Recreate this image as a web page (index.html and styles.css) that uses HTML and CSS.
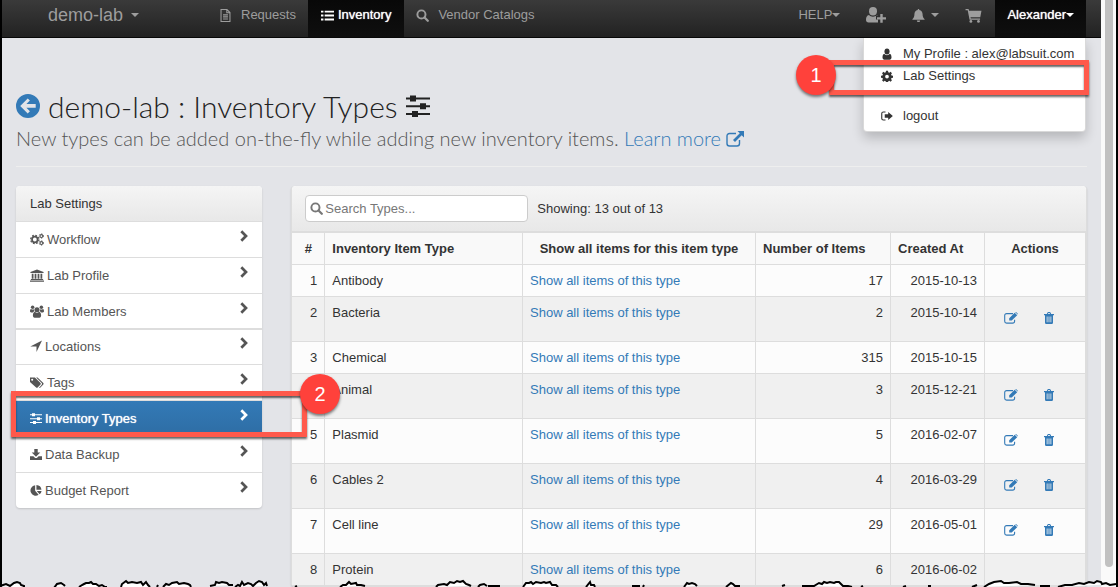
FILE: index.html
```html
<!DOCTYPE html>
<html lang="en">
<head>
  <meta charset="UTF-8">
  <meta name="viewport" content="width=device-width, initial-scale=1.0">
  <title>demo-lab : Inventory Types</title>
  <link rel="stylesheet" href="styles.css">
</head>
<body>

  <!-- Icons -->
  <svg class="sprite" aria-hidden="true">
    <symbol id="i-file" viewBox="0 0 16 16"><path d="M2.500.7h7.300l3.700 3.700v10.900h-11zM9.600.9v3.800h3.700M5 7.200h6M5 9.700h6M5 12.200h6" fill="none" stroke="currentColor" stroke-width="1.300"/></symbol>
    <symbol id="i-list" viewBox="0 0 16 16"><path d="M0 2h3v2.4H0zM4.5 2H16v2.4H4.5zM0 6.8h3v2.4H0zM4.5 6.8H16v2.4H4.5zM0 11.6h3V14H0zM4.5 11.6H16V14H4.5z"/></symbol>
    <symbol id="i-search" viewBox="0 0 16 16"><circle cx="6.7" cy="6.7" r="5" fill="none" stroke="currentColor" stroke-width="2.4"/><path d="M10.5 10.5l4 4" stroke="currentColor" stroke-width="2.8" stroke-linecap="round"/></symbol>
    <symbol id="i-user" viewBox="0 0 16 16"><ellipse cx="8" cy="4.6" rx="3.4" ry="4"/><path d="M4.3 7.8C2.600 8.200 2 10.500 2 12.800 2 14.500 3 15.500 4.500 15.500h7c1.500 0 2.500-1 2.500-2.700 0-2.300-.6-4.600-2.300-5C10.200 10.200 5.800 10.200 4.300 7.800z"/></symbol>
    <symbol id="i-user-plus" viewBox="0 0 20 16"><ellipse cx="7" cy="4.200" rx="4" ry="4.200"/><path d="M3 8C.8 8.300 0 10.500 0 12.800 0 14.500 1 15.500 2.500 15.500h9.500v-3H10V8.600h2C11.700 8.200 11.300 8.100 11 8 9 10.300 5 10.300 3 8z"/><path d="M14.300 7h2.400v3.200H20v2.400h-3.300v3.200h-2.400v-3.200H11v-2.400h3.300z"/></symbol>
    <symbol id="i-bell" viewBox="0 0 16 16"><path d="M8 0c.8 0 1 .6 1 1.300 2.700.5 4 2.600 4 5 0 3.500 1 4.900 2.500 6.300v.6H.5v-.6C2 11.200 3 9.800 3 6.300c0-2.400 1.300-4.500 4-5C7 .6 7.200 0 8 0zM6 14h4c0 1.200-.8 2-2 2s-2-.8-2-2z"/></symbol>
    <symbol id="i-cart" viewBox="0 0 17 16"><path d="M0 1h3.200l.6 1.800H17l-1.300 7H5.300l.3 1.300h9.900v1.400H4.300L2.300 2.400H0z"/><circle cx="5.700" cy="14.300" r="1.500"/><circle cx="13.800" cy="14.300" r="1.500"/></symbol>
    <symbol id="i-gear" viewBox="0 0 16 16"><path fill-rule="evenodd" d="M6.700 1h2.600l.4 2 1.400.6 1.700-1.200 1.800 1.800-1.200 1.700.6 1.400 2 .4v2.600l-2 .4-.6 1.400 1.200 1.700-1.800 1.800-1.700-1.200-1.400.6-.4 2H6.700l-.4-2-1.400-.6-1.700 1.200-1.800-1.800 1.200-1.700-.6-1.400-2-.4V7.700l2-.4.6-1.400L1.400 4.200l1.800-1.800 1.700 1.200L6.300 3zM8 6.300a2.500 2.500 0 1 0 0 5 2.500 2.500 0 0 0 0-5z"/></symbol>
    <symbol id="i-logout" viewBox="0 0 16 16"><path d="M6 2.700H3.200C1.800 2.700 1 3.500 1 4.800v6.400c0 1.300.8 2.100 2.200 2.100H6" fill="none" stroke="currentColor" stroke-width="1.500"/><path d="M9.600 2.800L15.800 8l-6.200 5.200V10.300H5V5.700h4.600z"/></symbol>
    <symbol id="i-back" viewBox="0 0 24 24"><path fill-rule="evenodd" d="M12 0a12 12 0 1 0 0 24 12 12 0 0 0 0-24zM11.700 4.400l2.200 2.200-3.500 3.500h9.300v3.600h-9.300l3.500 3.500-2.200 2.200L4.200 12z"/></symbol>
    <symbol id="i-sliders" viewBox="0 0 24 22"><path d="M0 2.500h4v2H0zM10 2.500h14v2H10zM4 .5h6v6H4zM0 10.300h14v2H0zM20 10.300h4v2h-4zM14 8.300h6v6h-6zM0 18h6v2H0zM12 18h12v2H12zM6 16h6v6H6z"/></symbol>
    <symbol id="i-external" viewBox="0 0 18 16"><path d="M10 2.500H3.500C2 2.500 1 3.500 1 5v7.500C1 14 2 15 3.500 15H11c1.500 0 2.500-1 2.500-2.500V9" fill="none" stroke="currentColor" stroke-width="1.400"/><path d="M11.500 0H18v6.500l-2.300-2.300L9 11 7 9l6.800-6.700z"/></symbol>
    <symbol id="i-cogs" viewBox="0 0 16 14"><circle cx="5.500" cy="7" r="3.200" fill="none" stroke="currentColor" stroke-width="2"/><circle cx="5.500" cy="7" r="4.700" fill="none" stroke="currentColor" stroke-width="1.500" stroke-dasharray="2 1.690"/><g fill="none" stroke="currentColor"><circle cx="13" cy="3" r="1.600" stroke-width="1.200"/><circle cx="13" cy="3" r="2.500" stroke-dasharray="1.300 1.318"/><circle cx="13" cy="11" r="1.600" stroke-width="1.200"/><circle cx="13" cy="11" r="2.500" stroke-dasharray="1.300 1.318"/></g></symbol>
    <symbol id="i-bank" viewBox="0 0 16 14"><path d="M8 0l7.500 3v1.200H.5V3zM2 5h2v5.600H2zM5.300 5h2v5.600h-2zM8.700 5h2v5.600h-2zM12 5h2v5.600h-2zM1 11h14v1H1zM0 12.700h16V14H0z"/></symbol>
    <symbol id="i-users" viewBox="0 0 16 14"><circle cx="8" cy="5" r="2.900"/><path d="M5.600 7.300C4 7.600 3.300 9.500 3.300 11.700c0 1.500.7 2.300 1.900 2.300h5.600c1.200 0 1.900-.8 1.900-2.300 0-2.200-.7-4.100-2.300-4.400C9 9 7 9 5.600 7.300z"/><circle cx="3" cy="2.100" r="2"/><circle cx="13" cy="2.100" r="2"/><path d="M1.200 4C.2 4.300 0 5.500 0 6.700 0 7.500.5 8 1.300 8h1.900c.5-.8 1-1.200 1.800-1.400C4.500 5.800 4.400 5.200 4.500 4.300 3.500 5 2.200 4.900 1.200 4zM14.800 4c1 .3 1.200 1.500 1.200 2.700 0 .8-.5 1.300-1.300 1.300h-1.900c-.5-.8-1-1.200-1.800-1.400.5-.8.6-1.400.5-2.300 1 .7 2.300.6 3.300-.3z"/></symbol>
    <symbol id="i-arrow" viewBox="0 0 12 12"><path d="M12 0L6.500 11.500V6H.3z"/></symbol>
    <symbol id="i-tags" viewBox="0 0 16 14"><path fill-rule="evenodd" d="M0 1.300h5.600L12 7.700c.5.500.5 1.200 0 1.700l-3.300 3.300c-.5.500-1.200.5-1.700 0L0 6.300zM2.500 2.700a1.200 1.200 0 1 0 0 2.400 1.200 1.200 0 0 0 0-2.400z"/><path d="M7 1.300h1.600L15.200 7.700c.5.500.5 1.200 0 1.700l-3.300 3.300c-.5.500-1 .6-1.500.2l3-3.400c.5-.6.5-1.200 0-1.800z"/></symbol>
    <symbol id="i-download" viewBox="0 0 14 13"><path d="M5 0h4v4.300h3L7 9.200 2 4.300h3zM0 8.500h4l2 2h2l2-2h4V13H0z"/></symbol>
    <symbol id="i-pie" viewBox="0 0 14 14"><path d="M6 1v6.400l4 4.500A6 6 0 1 1 6 1zM7.500.5A6.300 6.300 0 0 1 13.400 6H7.500zM7.900 7.500h5.600A6 6 0 0 1 11.200 11.500z"/></symbol>
    <symbol id="i-chevron" viewBox="0 0 8 12"><path d="M1.300 1.300L6 6l-4.700 4.700" fill="none" stroke="currentColor" stroke-width="2.700"/></symbol>
    <symbol id="i-edit" viewBox="0 0 14 12"><path d="M9 1.600H2.600C1.500 1.600.7 2.300.7 3.500v5.700c0 1.200.8 1.900 1.900 1.900h6c1.200 0 2-.7 2-1.900V7.700" fill="none" stroke="currentColor" stroke-width="1.100"/><path d="M10.700.8l2.500 2.400-5.500 5.400H5.200V6.200zM11.300.3c.3-.3.700-.3 1 0l1.300 1.300c.3.300.3.700 0 1z"/></symbol>
    <symbol id="i-trash" viewBox="0 0 10 12"><path fill-rule="evenodd" d="M0 2h2.800l.7-1.500C3.700.2 3.900 0 4.200 0h1.600c.3 0 .5.200.7.500L7.200 2H10v1.200H9v7.300C9 11.400 8.500 12 7.800 12H2.200C1.500 12 1 11.400 1 10.500V3.200H0zM4 2h2L5.600 1H4.400zM2.700 4.400v5.800h.8V4.400zM4.600 4.400v5.800h.8V4.400zM6.500 4.400v5.800h.8V4.400z"/></symbol>
  </svg>

  <div class="page">
    <nav class="navbar">
      <a class="brand" href="#">demo-lab <span class="caret"></span></a>
      <ul class="nav nav-main">
        <li><a href="#"><svg class="icon"><use href="#i-file"/></svg>Requests</a></li>
        <li class="active"><a class="tight" href="#"><svg class="icon"><use href="#i-list"/></svg>Inventory</a></li>
        <li><a href="#"><svg class="icon"><use href="#i-search"/></svg>Vendor Catalogs</a></li>
      </ul>
      <ul class="nav nav-right">
        <li><a href="#">HELP<span class="caret"></span></a></li>
        <li><a href="#" aria-label="Invite user"><svg class="icon-wide"><use href="#i-user-plus"/></svg></a></li>
        <li><a class="bell" href="#" aria-label="Notifications"><svg class="icon"><use href="#i-bell"/></svg><span class="caret"></span></a></li>
        <li><a href="#" aria-label="Cart"><svg class="icon-cart"><use href="#i-cart"/></svg></a></li>
        <li class="active account">
          <a href="#">Alexander<span class="caret"></span></a>
          <ul class="dropdown">
            <li><a href="#"><svg class="icon-small"><use href="#i-user"/></svg>My Profile : alex@labsuit.com</a></li>
            <li class="marked">
              <a href="#"><svg class="icon-small"><use href="#i-gear"/></svg>Lab Settings</a>
              <div class="callout callout-one"><span class="badge">1</span></div>
            </li>
            <li class="divided"><a href="#"><svg class="icon-small"><use href="#i-logout"/></svg>logout</a></li>
          </ul>
        </li>
      </ul>
    </nav>

    <main class="content">
      <header class="page-header">
        <h1>
          <a href="#" aria-label="Back"><svg class="icon-title"><use href="#i-back"/></svg></a>
          demo-lab : Inventory Types
          <svg class="icon-title"><use href="#i-sliders"/></svg>
        </h1>
        <p>New types can be added on-the-fly while adding new inventory items.
          <a href="#">Learn more <svg class="icon-link"><use href="#i-external"/></svg></a></p>
      </header>

      <div class="columns">
        <aside class="panel sidebar">
          <h2 class="panel-heading">Lab Settings</h2>
          <ul class="menu">
            <li><a href="#"><svg class="icon-menu"><use href="#i-cogs"/></svg>Workflow<svg class="chevron"><use href="#i-chevron"/></svg></a></li>
            <li><a href="#"><svg class="icon-menu"><use href="#i-bank"/></svg>Lab Profile<svg class="chevron"><use href="#i-chevron"/></svg></a></li>
            <li><a href="#"><svg class="icon-menu"><use href="#i-users"/></svg>Lab Members<svg class="chevron"><use href="#i-chevron"/></svg></a></li>
          </ul>
          <ul class="menu">
            <li><a href="#"><svg class="icon-menu slim"><use href="#i-arrow"/></svg>Locations<svg class="chevron"><use href="#i-chevron"/></svg></a></li>
            <li><a href="#"><svg class="icon-menu"><use href="#i-tags"/></svg>Tags<svg class="chevron"><use href="#i-chevron"/></svg></a></li>
            <li class="active">
              <a href="#"><svg class="icon-menu slim"><use href="#i-sliders"/></svg>Inventory Types<svg class="chevron"><use href="#i-chevron"/></svg></a>
              <div class="callout callout-two"><span class="badge">2</span></div>
            </li>
            <li><a href="#"><svg class="icon-menu slim"><use href="#i-download"/></svg>Data Backup<svg class="chevron"><use href="#i-chevron"/></svg></a></li>
            <li><a href="#"><svg class="icon-menu slim"><use href="#i-pie"/></svg>Budget Report<svg class="chevron"><use href="#i-chevron"/></svg></a></li>
          </ul>
        </aside>

        <section class="panel types">
          <div class="panel-heading toolbar">
            <label class="search">
              <svg class="icon"><use href="#i-search"/></svg>
              <input type="text" placeholder="Search Types..." aria-label="Search Types">
            </label>
            <span>Showing: 13 out of 13</span>
          </div>
          <table>
            <thead>
              <tr>
                <th class="col-num">#</th>
                <th class="left">Inventory Item Type</th>
                <th class="col-show">Show all items for this item type</th>
                <th class="col-count left">Number of Items</th>
                <th class="col-date left">Created At</th>
                <th class="col-actions">Actions</th>
              </tr>
            </thead>
            <tbody id="types"></tbody>
          </table>
        </section>
      </div>
    </main>
  </div>
  <div class="scrollbar"><div class="thumb"></div></div>

  <!-- Torn paper edge -->
  <svg class="torn" viewBox="0 0 1118 8" preserveAspectRatio="none" aria-hidden="true">
    <path d="M0 7l3-1 3-1 4 2 4-3 3-1 3 1 1 2 3 1v2M54 9l3-4 4-1 3 2 1 1M79 8l3-2 2-1 2-1 3 0 2-1 2 2 3 0 3 2 3-1 3 2 2 0M121 8l1-3 4-3 2 2 4-1 5 1 4-1 2 3 3-3 2 3 2 2M157 8l1-2M163 8l3-3 3 1 3-2 5-1 2 2 5-1 4 1 2 1 1 2M210 7l5-1 1-3 3 1 3-1 5 1 2 2 4 0M235 8l3-2 2 1 2-4 2 3 4-2 3 1 2 2 3-3 3-2 3 1 2 3 2-2 1 3M295 8l2-1M340 8l3-2 3 0 3-3 2 2 5-1 1 2 4 0 4 1M436 8l2-2 6-1 3 1 3-3 4 1 3-2 3 1 3-1 3 3 3 1 2 1M478 8l2-2 4-1 3 2M488 7h12M523 8l3-4 3 0 2-1 2 2 3-2 5 1 3-1 2 1 4-1 2 3 4 0 2 2M586 8l4-5 1 3 3 0 1 2M632 7l8 0M643 8l1-2M684 8l3-4 2 1 3-1 3 1 2 2M726 8l5-4 2 1 2 2 5 0M782 7l3-1M802 7l12 0 5-3 3 1 2-2 3 1 3-1 4 1 2-1 3 0 4 4 5 0 4 1M861 8l2-1M903 8l3-1M928 7h3M972 8l5-2M984 8l5-3 5-2 7-1 3 2 5 0 8-1 4 2 7 0 7 1M1040 7l10 0M1058 8l7-2 7 0 7-2 5 1 5-2 5 1 3-2 4 1 1 2 4-1 4 2 6-1"/>
  </svg>

  <script>
    const types = [
      { name: "Antibody", count: 17, created: "2015-10-13" },
      { name: "Bacteria", count: 2, created: "2015-10-14", editable: true },
      { name: "Chemical", count: 315, created: "2015-10-15" },
      { name: "Animal", count: 3, created: "2015-12-21", editable: true },
      { name: "Plasmid", count: 5, created: "2016-02-07", editable: true },
      { name: "Cables 2", count: 4, created: "2016-03-29", editable: true },
      { name: "Cell line", count: 29, created: "2016-05-01", editable: true },
      { name: "Protein", count: 6, created: "2016-06-02" }
    ];

    const actions = `
      <div class="actions">
        <button type="button" aria-label="Edit"><svg class="icon-edit"><use href="#i-edit"/></svg></button>
        <button type="button" aria-label="Delete"><svg class="icon-trash"><use href="#i-trash"/></svg></button>
      </div>`;

    document.getElementById("types").innerHTML = types.map((type, index) => `
      <tr>
        <td class="right">${index + 1}</td>
        <td>${type.name}</td>
        <td><a href="#">Show all items of this type</a></td>
        <td class="right">${type.count}</td>
        <td class="right">${type.created}</td>
        <td>${type.editable ? actions : ""}</td>
      </tr>`).join("");
  </script>
</body>
</html>
```
FILE: styles.css
```css
* { margin: 0; padding: 0; box-sizing: border-box; }
body {
  display: flex;
  height: 100vh;
  overflow: hidden;
  border: solid #000;
  border-width: 0 2px;
  background: #e3e4e8;
  color: #333;
  font-family: "Liberation Sans", Arial, sans-serif;
  font-size: 13px;
  line-height: 16px;
}
ul { list-style: none; }
a { color: #337ab7; text-decoration: none; }
svg { fill: currentColor; flex: none; }
.sprite { position: absolute; width: 0; height: 0; }
.icon { width: 13px; height: 13px; }
.icon-small { width: 12px; height: 12px; }
.icon-wide { width: 20px; height: 16px; }
.icon-cart { width: 17px; height: 15px; }
.icon-title { width: 24px; height: 24px; }
.icon-link { width: 18px; height: 16px; }
.icon-edit { width: 14px; height: 12px; }
.icon-trash { width: 10px; height: 12px; }
.caret {
  border: 4px solid transparent;
  border-top-color: currentColor;
  border-bottom: 0;
}

.page { flex: 1; min-width: 0; }

/* Navbar */
.navbar {
  display: flex;
  height: 38px;
  background: linear-gradient(#3a3a3a, #222);
  border-bottom: 1px solid #080808;
}
.navbar a {
  display: flex;
  align-items: center;
  color: #9d9d9d;
}
.navbar .brand {
  gap: 8px;
  width: 205px;
  padding: 0 0 7px 46px;
  font-size: 18px;
}
.nav { display: flex; }
.nav > li > a {
  height: 37px;
  padding: 0 12px 7px;
  gap: 9px;
}
.nav > li > a.tight { padding: 0 13px 7px; gap: 4px; }
.nav-right { margin-left: auto; margin-right: 15px; }
.nav-right > li > a { padding: 0 13px 7px; gap: 0; }
.nav-right > .account > a { padding: 0 12px 7px; }
.nav-right > li > a.bell { gap: 6px; }
.nav > .active { background: linear-gradient(#080808, #0f0f0f); }
.nav > .active > a { color: #fff; text-shadow: 0 0 1px #fff; }
.account { position: relative; }

.dropdown {
  position: absolute;
  z-index: 5;
  top: 38px;
  right: 0;
  width: 223px;
  padding: 5px 0 4px;
  background: #fff;
  border: 1px solid rgba(0,0,0,0.15);
  border-top: 0;
  border-radius: 0 0 4px 4px;
  box-shadow: 0 6px 12px rgba(0,0,0,0.2);
}
.dropdown a {
  height: 22px;
  padding: 0 17px;
  gap: 10px;
  color: #333;
  white-space: nowrap;
}
.dropdown .marked { position: relative; }
.dropdown .divided { margin-top: 18px; }

/* Callouts */
.callout {
  position: absolute;
  z-index: 10;
  border: 5px solid #ff594b;
  box-shadow: 0 2px 2px rgba(0,0,0,0.6), inset 0 2px 2px rgba(0,0,0,0.6);
  pointer-events: none;
}
.callout-one { top: -5px; right: -4px; width: 260px; height: 35px; }
.callout-two { top: -10px; left: -5px; width: 296px; height: 46px; }
.badge {
  position: absolute;
  display: flex;
  align-items: center;
  justify-content: center;
  width: 40px;
  height: 40px;
  border-radius: 50%;
  background: #ff413b;
  box-shadow: 0 2px 3px rgba(0,0,0,0.5);
  color: #fff;
  font-size: 20px;
}
.callout-one .badge { top: -10px; left: -38px; }
.callout-two .badge { top: -22px; right: -38px; }

/* Page header */
.content { padding: 51px 14px 0; }
.page-header {
  padding-bottom: 15px;
  border-bottom: 1px solid #eee;
  font-family: Lato, "Liberation Sans", sans-serif;
  font-weight: 300;
}
.page-header h1 {
  display: flex;
  align-items: center;
  gap: 8px;
  color: #222;
  font-size: 30px;
  font-weight: 300;
  line-height: 34px;
}
.page-header h1 a { display: flex; }
.page-header p {
  padding-top: 2px;
  color: #555;
  font-size: 20px;
  line-height: 26px;
}
.page-header p svg { vertical-align: -1px; }

/* Panels */
.columns {
  display: flex;
  align-items: flex-start;
  gap: 29px;
  padding-top: 19px;
}
.panel {
  background: #fff;
  border-radius: 4px;
  box-shadow: 0 1px 2px rgba(0,0,0,0.15);
}
.panel-heading {
  padding: 10px 14px 9px;
  background: linear-gradient(#f5f5f5, #e8e8e8);
  border-bottom: 1px solid #ddd;
  border-radius: 4px 4px 0 0;
  font-size: 13px;
  font-weight: 400;
}
.sidebar { width: 23%; }
.menu li { border-bottom: 1px solid #ddd; }
.menu:last-child li:last-child { border-bottom: 0; }
.menu + .menu {
  margin-top: -1px;
  box-shadow: 0 -1px 0 #ddd, inset 0 1px 0 #ddd;
}
.menu a {
  display: flex;
  align-items: center;
  gap: 3px;
  height: 35px;
  padding: 0 14px;
  color: #555;
}
.icon-menu { width: 14px; height: 13px; }
.icon-menu.slim { width: 12px; }
.chevron { width: 8px; height: 12px; margin: 0 0 7px auto; }
.menu .active {
  position: relative;
  background: linear-gradient(#337ab7, #2e6da4);
}
.menu .active > a { color: #fff; text-shadow: 0 0 1px #fff; }

.types { flex: 1; min-width: 0; border: 1px solid #ddd; border-top: 0; }
.toolbar {
  display: flex;
  align-items: center;
  gap: 9px;
  padding: 9px 13px;
  border-bottom-width: 2px;
}
.search {
  display: flex;
  align-items: center;
  gap: 2px;
  width: 223px;
  height: 27px;
  padding: 0 4px;
  background: #fff;
  border: 1px solid #ccc;
  border-radius: 4px;
  color: #777;
}
.search input {
  flex: 1;
  min-width: 0;
  border: 0;
  outline: 0;
  background: none;
  font: inherit;
}
.search input::placeholder { color: #777; opacity: 1; }

table {
  width: 100%;
  table-layout: fixed;
  border-collapse: separate;
  border-spacing: 0;
}
th, td {
  padding: 8px 7px 7px;
  border-right: 1px solid #ddd;
  border-bottom: 1px solid #ddd;
  text-align: left;
  vertical-align: top;
}
th { background: #f9f9f9; text-align: center; white-space: nowrap; }
th.left { text-align: left; }
td.right { text-align: right; }
tbody tr { background: #fcfcfc; }
tbody tr:nth-child(even) { background: #f0f0f0; }
.col-num { width: 33px; }
.col-show { width: 233px; }
.col-count { width: 135px; }
.col-date { width: 94px; }
.col-actions { width: 101px; }
.actions { display: flex; padding-bottom: 4px; }
.actions button {
  display: flex;
  align-items: center;
  justify-content: center;
  width: 38px;
  height: 25px;
  border: 0;
  background: none;
  color: #337ab7;
}

/* Window edges */
.scrollbar {
  width: 15px;
  padding: 0 3px 0 4px;
  background: #fafafa;
}
.thumb {
  height: calc(100% - 20px);
  background: #c1c1c1;
  border-radius: 0 0 4px 4px;
}
.torn {
  position: absolute;
  z-index: 20;
  left: 0;
  bottom: 0;
  width: 100%;
  height: 8px;
  fill: #fff;
  stroke: #000;
  stroke-width: 2;
}
```
